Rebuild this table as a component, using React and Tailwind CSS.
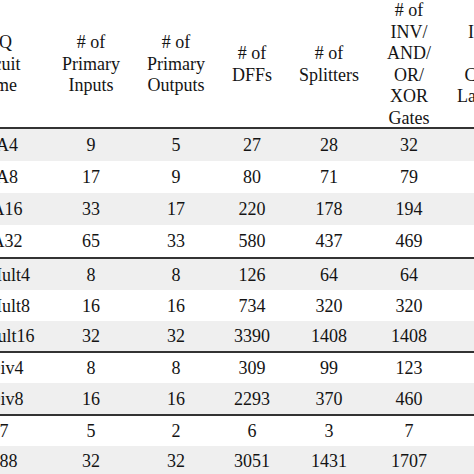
import React from "react";

const cols = "grid grid-cols-[91px_100px_70px_82px_72px_88px_66px]";

const header = [
  ["SFQ", "Circuit", "Name"],
  ["# of", "Primary", "Inputs"],
  ["# of", "Primary", "Outputs"],
  ["# of", "DFFs"],
  ["# of", "Splitters"],
  ["# of", "INV/", "AND/", "OR/", "XOR", "Gates"],
  ["Ideal", "in", "Clock", "Latency"],
];

const rows = [
  { v: ["KSA4", "9", "5", "27", "28", "32", "5"], h: "h-[32px]", top: false },
  { v: ["KSA8", "17", "9", "80", "71", "79", "6"], h: "h-[32px]", top: false },
  { v: ["KSA16", "33", "17", "220", "178", "194", "7"], h: "h-[32px]", top: false },
  { v: ["KSA32", "65", "33", "580", "437", "469", "8"], h: "h-[32px]", top: false },
  { v: ["ArrMult4", "8", "8", "126", "64", "64", "9"], h: "h-[33px]", top: true },
  { v: ["ArrMult8", "16", "16", "734", "320", "320", "17"], h: "h-[31px]", top: false },
  { v: ["ArrMult16", "32", "32", "3390", "1408", "1408", "33"], h: "h-[30px]", top: false },
  { v: ["IntDiv4", "8", "8", "309", "99", "123", "21"], h: "h-[32px]", top: true },
  { v: ["IntDiv8", "16", "16", "2293", "370", "460", "41"], h: "h-[31px]", top: false },
  { v: ["c17", "5", "2", "6", "3", "7", "3"], h: "h-[32px]", top: true },
  { v: ["c6288", "32", "32", "3051", "1431", "1707", "89"], h: "h-[30px]", top: false },
];

export default function App() {
  return (
    <div
      className="w-[474px] h-[474px] overflow-hidden bg-white text-[#141414] text-[18px] leading-[22px]"
      style={{ fontFamily: '"Liberation Serif", "Times New Roman", serif' }}
    >
      <div className="ml-[-50px] w-[569px]">
        <div className={`${cols} h-[129px] border-b-2 border-[#333]`}>
          {header.map((lines, i) => (
            <div key={i} className="flex items-center justify-center pb-[7px]">
              <div className="flex flex-col items-center whitespace-nowrap leading-[21.5px]">
                {lines.map((l, j) => (
                  <span key={j}>{l}</span>
                ))}
              </div>
            </div>
          ))}
        </div>
        {rows.map((r, i) => (
          <div
            key={i}
            className={`${cols} ${r.h} ${i % 2 === 0 ? "bg-[#efefef]" : "bg-white"} ${
              r.top ? "border-t-2 border-[#333]" : ""
            }`}
          >
            {r.v.map((v, j) => (
              <div key={j} className="flex items-center justify-center whitespace-nowrap">
                {v}
              </div>
            ))}
          </div>
        ))}
      </div>
    </div>
  );
}
